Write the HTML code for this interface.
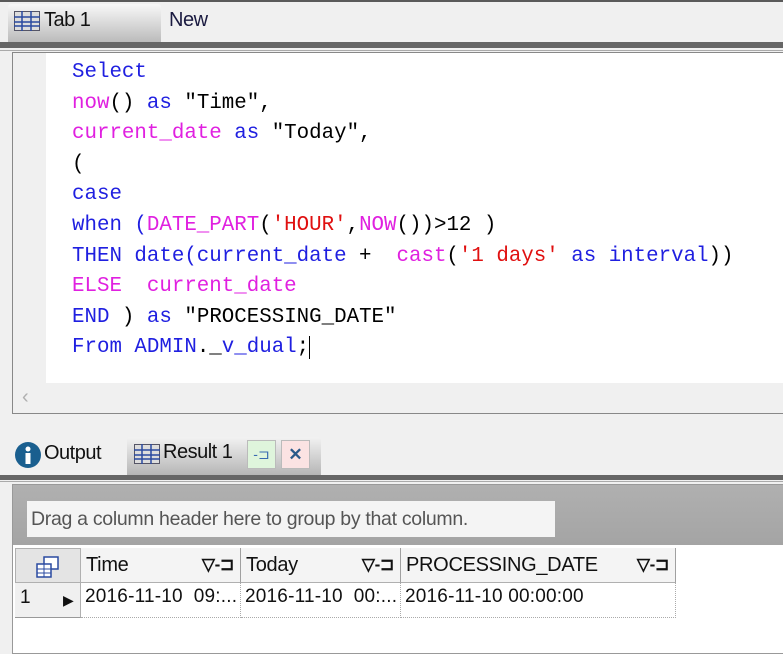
<!DOCTYPE html>
<html><head><style>
*{margin:0;padding:0;box-sizing:border-box}
body{width:783px;height:648px;background:#f0f0f0;position:relative;overflow:hidden;font-family:"Liberation Sans",sans-serif}
.abs{position:absolute}
.code{font-family:"Liberation Mono",monospace;font-size:20.8px;line-height:30.6px;white-space:pre;color:#000}
.k{color:#1f1fe0}.f{color:#e020e0}.s{color:#e01010}
.hdr{position:absolute;top:548px;height:35px;background:#f4f4f4;border-right:1px solid #a0a0a0;border-bottom:1px solid #b0b0b0;font-size:20px;color:#111;padding:6px 0 0 5px;letter-spacing:-0.3px}
.cell{position:absolute;top:583px;height:35px;border-right:1px dotted #aaa;border-bottom:1px dotted #aaa;font-size:19px;color:#111;padding:3px 0 0 4px;letter-spacing:0.2px;white-space:pre;overflow:hidden}
.fi{position:absolute;right:6px;top:7px;font-size:17px;font-weight:bold}
</style></head><body>
<div class="abs" style="left:0;top:0;width:783px;height:2px;background:#5a5a5a"></div>
<div class="abs" style="left:8px;top:4px;width:153px;height:40px;background:linear-gradient(#f8f8f8,#b8b8b8);border-radius:3px 3px 0 0"></div>
<svg class="abs" style="left:14px;top:11px" width="26" height="20"><rect x="0.5" y="0.5" width="25" height="19" fill="#ddd" stroke="#556"/><path d="M0 6H26M0 11H26M0 15H26M8 0V20M17 0V20" stroke="#2a4aa0" stroke-width="1.5"/></svg>
<div class="abs" style="left:44px;top:9px;font-size:20px;color:#111;letter-spacing:-0.5px">Tab 1</div>
<div class="abs" style="left:169px;top:9px;font-size:20px;color:#1a1a40;letter-spacing:-0.5px">New</div>
<div class="abs" style="left:0;top:42px;width:783px;height:6px;background:#666"></div>
<div class="abs" style="left:0;top:50px;width:783px;height:1px;background:#aaa"></div>
<div class="abs" style="left:12px;top:52px;width:780px;height:362px;border:1px solid #888;background:#fff"></div>
<div class="abs" style="left:13px;top:53px;width:33px;height:330px;background:#f0f0f0"></div>
<div class="abs" style="left:13px;top:383px;width:770px;height:30px;background:#f0f0f0"></div>
<div class="abs" style="left:22px;top:386px;font-size:20px;color:#b0b0b0">&lsaquo;</div>
<div class="abs code" style="left:72px;top:58px"><span class="k">Select</span>
<span class="f">now</span>() <span class="k">as</span> "Time",
<span class="f">current_date</span> <span class="k">as</span> "Today",
(
<span class="k">case</span>
<span class="k">when</span> <span class="k">(</span><span class="f">DATE_PART</span>(<span class="s">'HOUR'</span>,<span class="f">NOW</span>())&gt;12 )
<span class="k">THEN</span> <span class="k">date(current_date</span> +  <span class="f">cast</span>(<span class="s">'1 days'</span> <span class="k">as</span> <span class="k">interval</span>))
<span class="f">ELSE</span>  <span class="f">current_date</span>
<span class="k">END</span> ) <span class="k">as</span> "PROCESSING_DATE"
<span class="k">From</span> <span class="k">ADMIN</span>._<span class="k">v_dual</span>;<span style="border-left:1.5px solid #000"></span></div>
<svg class="abs" style="left:14px;top:441px" width="28" height="28"><circle cx="14" cy="14" r="13" fill="#1a5f8f"/><circle cx="14" cy="8" r="2.5" fill="#fff"/><rect x="11.5" y="12" width="5" height="11" fill="#fff"/></svg>
<div class="abs" style="left:44px;top:442px;font-size:20px;color:#111;letter-spacing:-0.5px">Output</div>
<div class="abs" style="left:127px;top:437px;width:194px;height:39px;background:linear-gradient(#f2f2f2,#b4b4b4);border-radius:3px 3px 0 0"></div>
<svg class="abs" style="left:134px;top:444px" width="26" height="20"><rect x="0.5" y="0.5" width="25" height="19" fill="#ddd" stroke="#556"/><path d="M0 6H26M0 11H26M0 15H26M8 0V20M17 0V20" stroke="#2a4aa0" stroke-width="1.5"/></svg>
<div class="abs" style="left:163px;top:441px;font-size:20px;color:#111;letter-spacing:-0.5px">Result 1</div>
<div class="abs" style="left:247px;top:440px;width:29px;height:29px;background:#dff5dc;border:1px solid #bbb;text-align:center;font-size:14px;color:#3a6ab0;line-height:27px">-⊐</div>
<div class="abs" style="left:281px;top:440px;width:29px;height:29px;background:#fbe3e3;border:1px solid #bbb;text-align:center;font-size:17px;font-weight:bold;color:#2a5a8a;line-height:27px">✕</div>
<div class="abs" style="left:0;top:475px;width:783px;height:5px;background:#666"></div>
<div class="abs" style="left:0;top:481px;width:783px;height:1px;background:#aaa"></div>
<div class="abs" style="left:12px;top:484px;width:780px;height:170px;border:1px solid #999;background:#fff"></div>
<div class="abs" style="left:13px;top:485px;width:770px;height:60px;background:linear-gradient(#b0b0b0,#a4a4a4)"></div>
<div class="abs" style="left:27px;top:501px;width:528px;height:36px;background:#f4f4f4;font-size:19.5px;color:#555;padding:7px 0 0 4px;letter-spacing:-0.3px">Drag a column header here to group by that column.</div>
<div class="hdr" style="left:15px;width:66px;background:#e4e4e4;border:1px solid #b0b0b0"><svg style="margin:0 0 0 13px" width="28" height="24"><rect x="10" y="2" width="14" height="12" fill="#fff" stroke="#2a4aa0" stroke-width="1.5"/><rect x="3" y="9" width="14" height="13" fill="#fff" stroke="#2a4aa0" stroke-width="1.5"/><path d="M3 14H17M3 18H17M10 9V22" stroke="#2a4aa0"/></svg></div>
<div class="hdr" style="left:81px;width:160px">Time<span class="fi">▽-⊐</span></div>
<div class="hdr" style="left:241px;width:160px">Today<span class="fi">▽-⊐</span></div>
<div class="hdr" style="left:401px;width:275px">PROCESSING_DATE<span class="fi">▽-⊐</span></div>
<div class="abs" style="left:15px;top:583px;width:66px;height:35px;background:#f0f0f0;border-right:1px solid #b0b0b0;border-bottom:1px solid #999;font-size:19px;padding:4px 0 0 5px;color:#111">1<span style="position:absolute;left:48px;top:9px;font-size:14px">▶</span></div>
<div class="cell" style="left:81px;width:160px">2016-11-10  09:...</div>
<div class="cell" style="left:241px;width:160px">2016-11-10  00:...</div>
<div class="cell" style="left:401px;width:275px">2016-11-10 00:00:00</div>
</body></html>
